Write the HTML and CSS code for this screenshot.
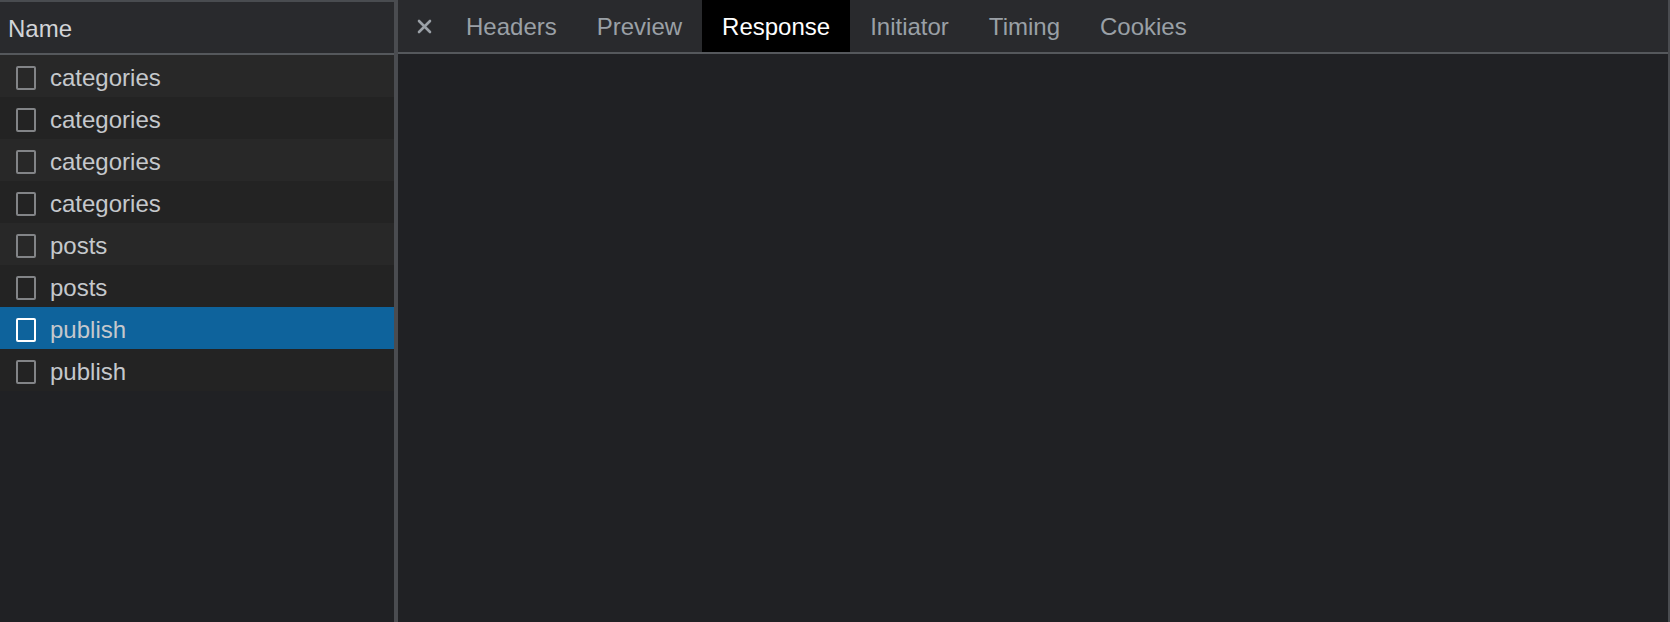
FILE: index.html
```html
<!DOCTYPE html>
<html lang="en">
  <head>
    <meta charset="UTF-8" />
    <meta name="viewport" content="width=device-width, initial-scale=1.0" />
    <title>Network</title>
    <link rel="stylesheet" href="styles.css">
  </head>
  <body>
    <div class="devtools">
      <div class="requests">
        <div class="requests-header">Name</div>
        <ul class="request-list">
          <li class="request odd"><span class="file-icon"></span>categories</li>
          <li class="request even"><span class="file-icon"></span>categories</li>
          <li class="request odd"><span class="file-icon"></span>categories</li>
          <li class="request even"><span class="file-icon"></span>categories</li>
          <li class="request odd"><span class="file-icon"></span>posts</li>
          <li class="request even"><span class="file-icon"></span>posts</li>
          <li class="request selected"><span class="file-icon"></span>publish</li>
          <li class="request even"><span class="file-icon"></span>publish</li>
        </ul>
      </div>

      <div class="details">
        <div class="tabs">
          <span class="close-tab">
            <svg width="15" height="15" viewBox="0 0 15 15">
              <path d="M2 2 L13 13 M13 2 L2 13" stroke="#9aa0a6" stroke-width="2.6" stroke-linecap="round" />
            </svg>
          </span>
          <span class="tab">Headers</span>
          <span class="tab">Preview</span>
          <span class="tab active">Response</span>
          <span class="tab">Initiator</span>
          <span class="tab">Timing</span>
          <span class="tab">Cookies</span>
        </div>
        <div class="details-body"></div>
      </div>
    </div>
  </body>
</html>
```

FILE: styles.css
```css
html,
body {
  margin: 0;
  padding: 0;
  height: 100%;
}
body {
  background-color: #202124;
  font-family: "Liberation Sans", Arial, sans-serif;
  font-size: 24px;
  overflow: hidden;
}
.devtools {
  display: flex;
  height: 622px;
}
.requests {
  width: 394px;
  flex-shrink: 0;
  border-right: 4px solid #4a4c50;
  background-color: #202124;
}
.requests-header {
  height: 55px;
  box-sizing: border-box;
  border-top: 2px solid #494c50;
  border-bottom: 2px solid #55585c;
  background-color: #292a2d;
  color: #d2d4d8;
  padding: 2px 0 0 8px;
  display: flex;
  align-items: center;
}
.request-list {
  list-style: none;
  margin: 0;
  padding: 0;
}
.request {
  height: 42px;
  box-sizing: border-box;
  display: flex;
  align-items: center;
  color: #c5c8cc;
  padding: 3px 0 0 16px;
}
.request.odd {
  background-color: #282828;
}
.request.even {
  background-color: #232323;
}
.request.selected {
  background-color: #0e639c;
}
.file-icon {
  width: 16px;
  height: 20px;
  border: 2px solid #828487;
  border-radius: 2px;
  margin-right: 14px;
}
.selected .file-icon {
  border-color: #ffffff;
}
.details {
  flex: 1;
  border-right: 2px solid #4a4c50;
  display: flex;
  flex-direction: column;
}
.tabs {
  height: 52px;
  background-color: #292a2d;
  border-bottom: 2px solid #55585c;
  display: flex;
  align-items: stretch;
}
.close-tab {
  display: flex;
  align-items: center;
  padding: 0 14px 0 19px;
}
.tab {
  display: flex;
  align-items: center;
  padding: 2px 20px 0;
  color: #9aa0a6;
  font-size: 24px;
}
.tab.active {
  background-color: #000000;
  color: #ffffff;
}
.details-body {
  flex: 1;
  background-color: #202124;
}
```
